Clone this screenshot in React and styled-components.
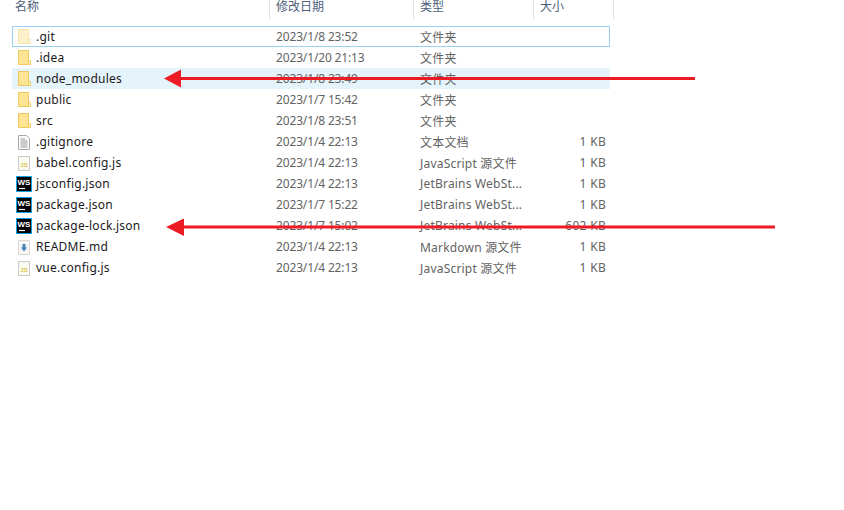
import React from "react";
import styled, { createGlobalStyle } from "styled-components";

const FILES = [
  { name: ".git", date: "2023/1/8 23:52", type: "文件夹", size: "", icon: "folder", state: "focused" },
  { name: ".idea", date: "2023/1/20 21:13", type: "文件夹", size: "", icon: "folder" },
  { name: "node_modules", date: "2023/1/8 23:49", type: "文件夹", size: "", icon: "folder", state: "hovered" },
  { name: "public", date: "2023/1/7 15:42", type: "文件夹", size: "", icon: "folder" },
  { name: "src", date: "2023/1/8 23:51", type: "文件夹", size: "", icon: "folder" },
  { name: ".gitignore", date: "2023/1/4 22:13", type: "文本文档", size: "1 KB", icon: "text" },
  { name: "babel.config.js", date: "2023/1/4 22:13", type: "JavaScript 源文件", size: "1 KB", icon: "js" },
  { name: "jsconfig.json", date: "2023/1/4 22:13", type: "JetBrains WebSt...", size: "1 KB", icon: "ws" },
  { name: "package.json", date: "2023/1/7 15:22", type: "JetBrains WebSt...", size: "1 KB", icon: "ws" },
  { name: "package-lock.json", date: "2023/1/7 15:02", type: "JetBrains WebSt...", size: "602 KB", icon: "ws" },
  { name: "README.md", date: "2023/1/4 22:13", type: "Markdown 源文件", size: "1 KB", icon: "md" },
  { name: "vue.config.js", date: "2023/1/4 22:13", type: "JavaScript 源文件", size: "1 KB", icon: "js" },
];

const FolderIcon = ({ faded }) => (
  <svg width="16" height="16" viewBox="0 0 16 16" opacity={faded ? 0.5 : 1}>
    <path d="M2.5.5h10v14h-10z" fill="#fde594" stroke="#efc85e" />
    <path d="M12.5 10.5h2v4h-2z" fill="#fff8e0" stroke="#efc85e" />
  </svg>
);

const TextIcon = () => (
  <svg width="16" height="16" viewBox="0 0 16 16">
    <path d="M2.5 1.5h8l3 3v11h-11z" fill="#fdfdfd" stroke="#a8a8a8" />
    <path d="M4.5 5h5M4.5 7h7M4.5 9h7M4.5 11h7M4.5 13h7" stroke="#9a9a9a" />
  </svg>
);

const JsIcon = () => (
  <svg width="16" height="16" viewBox="0 0 16 16">
    <path d="M2.5 1.5h11v14h-11z" fill="#fbfbf2" stroke="#c9c9c9" />
    <text x="8" y="12" fontFamily="Liberation Sans, sans-serif" fontSize="6" fontWeight="700" fill="#d8c24a" textAnchor="middle">JS</text>
  </svg>
);

const WsIcon = () => (
  <svg width="16" height="16" viewBox="0 0 16 16">
    <path d="M0 0h16v16H0z" fill="#0ea5e0" />
    <path d="M1 1h14v14H1z" fill="#000" />
    <text x="8" y="9" fontFamily="Liberation Sans, sans-serif" fontSize="8" fontWeight="700" fill="#fff" textAnchor="middle">WS</text>
    <path d="M3 12.5h6" stroke="#fff" strokeWidth="1.2" />
  </svg>
);

const MdIcon = () => (
  <svg width="16" height="16" viewBox="0 0 16 16">
    <path d="M2.5 1.5h11v14h-11z" fill="#f6f6f6" stroke="#d8d8d8" />
    <path d="M6.5 5h3v3.5h1.5L8 12.5 5 8.5h1.5z" fill="#4a84b8" />
  </svg>
);

const FileIcon = ({ kind, faded }) => {
  if (kind === "folder") return <FolderIcon faded={faded} />;
  if (kind === "text") return <TextIcon />;
  if (kind === "js") return <JsIcon />;
  if (kind === "ws") return <WsIcon />;
  return <MdIcon />;
};

const App = () => {
  return (
    <>
      <GlobalStyle />
      <Page>
        <Header>
          <HeaderCell $width={258}>名称</HeaderCell>
          <HeaderCell $width={144}>修改日期</HeaderCell>
          <HeaderCell $width={120}>类型</HeaderCell>
          <HeaderCell $width={80}>大小</HeaderCell>
        </Header>
        <List>
          {FILES.map((file) => (
            <Row key={file.name} $state={file.state}>
              <NameCell>
                <FileIcon kind={file.icon} faded={file.state === "focused"} />
                <Name>{file.name}</Name>
              </NameCell>
              <DateCell>{file.date}</DateCell>
              <TypeCell>{file.type}</TypeCell>
              <SizeCell>{file.size}</SizeCell>
            </Row>
          ))}
        </List>
        <Arrows width="844" height="510" viewBox="0 0 844 510">
          <path d="M695 78.5H178" stroke="#ed1c24" strokeWidth="3" />
          <path d="M164 78.5L181 69.5V87.5z" fill="#ed1c24" />
          <path d="M775 227H180" stroke="#ed1c24" strokeWidth="3" />
          <path d="M166 227L184 218.5V236z" fill="#ed1c24" />
        </Arrows>
      </Page>
    </>
  );
};

const GlobalStyle = createGlobalStyle`
  html, body {
    margin: 0;
    padding: 0;
    background: #fff;
  }
`;
const Page = styled.div`
  position: relative;
  width: 844px;
  height: 510px;
  overflow: hidden;
  background: #fff;
  font-family: "Noto Sans", "Noto Sans CJK SC", sans-serif;
  font-size: 12px;
`;
const Header = styled.div`
  display: flex;
  height: 20px;
  padding-left: 12px;
  margin-bottom: 6px;
`;
const HeaderCell = styled.div`
  box-sizing: border-box;
  width: ${(p) => p.$width}px;
  padding-left: 3px;
  color: #4c607a;
  line-height: 14px;
  border-right: 1px solid #e5e5e5;
  &:not(:first-child) {
    padding-left: 6px;
  }
`;
const List = styled.div`
  display: flex;
  flex-direction: column;
  width: 598px;
  margin-left: 12px;
`;
const Row = styled.div`
  box-sizing: border-box;
  display: grid;
  grid-template-columns: 263px 144px 120px 66px;
  align-items: center;
  height: 21px;
  color: #636363;
  background: ${(p) => (p.$state === "hovered" ? "#e5f3fb" : "transparent")};
  border: ${(p) => (p.$state === "focused" ? "1px solid #99d1f5" : "1px solid transparent")};
`;
const NameCell = styled.div`
  display: flex;
  align-items: center;
  gap: 4px;
  padding-left: 3px;
`;
const Name = styled.span`
  color: #1a1a1a;
  letter-spacing: 0.25px;
`;
const Cell = styled.div`
  white-space: nowrap;
`;
const DateCell = styled(Cell)`
  letter-spacing: -0.15px;
`;
const TypeCell = styled(Cell)`
  letter-spacing: 0.2px;
`;
const SizeCell = styled(Cell)`
  text-align: right;
  letter-spacing: 0.3px;
`;
const Arrows = styled.svg`
  position: absolute;
  top: 0;
  left: 0;
  pointer-events: none;
`;

export default App;
